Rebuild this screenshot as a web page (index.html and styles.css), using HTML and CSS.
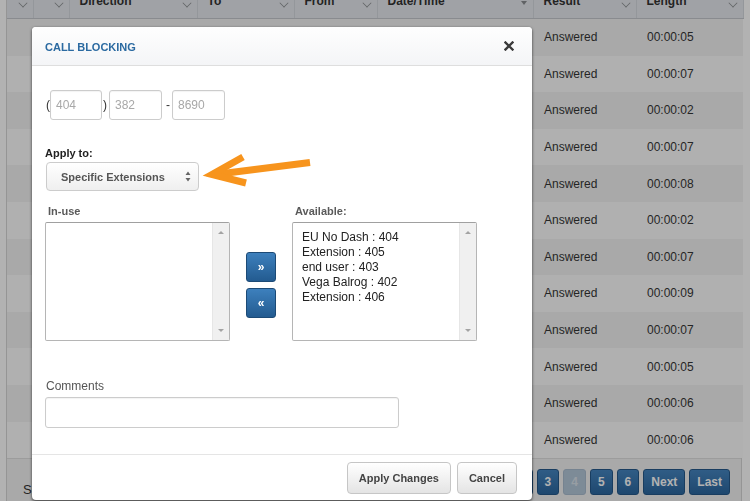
FILE: index.html
```html
<!DOCTYPE html>
<html lang="en">
<head>
<meta charset="utf-8"/>
<title>Call Log - Call Blocking</title>
<link rel="stylesheet" href="styles.css">
</head>
<body>
<div class="page">
  <table class="grid">
    <colgroup>
      <col style="width:26px"><col style="width:36px"><col style="width:128px"><col style="width:97px">
      <col style="width:83px"><col style="width:156px"><col style="width:103px"><col style="width:107px">
    </colgroup>
    <thead>
      <tr>
        <th><div class="th-in"><span></span><i class="chev"></i></div></th>
        <th><div class="th-in"><span></span><i class="chev"></i></div></th>
        <th><div class="th-in"><span>Direction</span><i class="chev"></i></div></th>
        <th><div class="th-in"><span>To</span><i class="chev"></i></div></th>
        <th><div class="th-in"><span>From</span><i class="chev"></i></div></th>
        <th><div class="th-in"><span>Date/Time</span><i class="caret"></i></div></th>
        <th><div class="th-in"><span>Result</span><i class="chev"></i></div></th>
        <th><div class="th-in"><span>Length</span><i class="chev"></i></div></th>
      </tr>
    </thead>
    <tbody id="rows"></tbody>
  </table>
  <div class="grid-foot">
    <span class="showing">Showing 31 to 40 of 64 entries</span>
    <div class="pager">
      <a class="pg">1</a>
      <a class="pg">2</a>
      <a class="pg">3</a>
      <a class="pg disabled">4</a>
      <a class="pg">5</a>
      <a class="pg">6</a>
      <a class="pg">Next</a>
      <a class="pg">Last</a>
    </div>
  </div>
</div>

<div class="backdrop"></div>

<div class="modal">
  <div class="modal-head">
    <span class="modal-title">CALL BLOCKING</span>
    <svg class="close" width="10" height="10" viewBox="0 0 10 10"><path d="M1.5 1.5 L8.5 8.5 M8.5 1.5 L1.5 8.5" stroke="#3a3a3a" stroke-width="2.4" stroke-linecap="square"/></svg>
  </div>
  <div class="modal-body">
    <div class="phone">
      <span class="paren-l">(</span>
      <input class="txt w52" placeholder="404">
      <span class="paren-r">)</span>
      <input class="txt w53" placeholder="382">
      <span class="dash">-</span>
      <input class="txt w53" placeholder="8690">
    </div>

    <div class="lbl-strong">Apply to:</div>
    <div class="select">
      <span>Specific Extensions</span>
      <svg width="6" height="11" viewBox="0 0 6 11"><path d="M3 0.5 L5.5 4 L0.5 4 Z M3 10.5 L5.5 7 L0.5 7 Z" fill="#666"/></svg>
    </div>

    <div class="pick">
      <div class="lbl-soft">In-use</div>
      <div></div>
      <div class="lbl-soft">Available:</div>

      <div class="listbox">
        <div class="items"></div>
        <div class="sbar"><i class="up"></i><i class="down"></i></div>
      </div>
      <div class="movers">
        <button class="btn-blue">&raquo;</button>
        <button class="btn-blue">&laquo;</button>
      </div>
      <div class="listbox">
        <div class="items">
          <div>EU No Dash : 404</div>
          <div>Extension : 405</div>
          <div>end user : 403</div>
          <div>Vega Balrog : 402</div>
          <div>Extension : 406</div>
        </div>
        <div class="sbar"><i class="up"></i><i class="down"></i></div>
      </div>
    </div>

    <div class="lbl-plain">Comments</div>
    <input class="txt comments">
  </div>
  <div class="modal-foot">
    <button class="btn">Apply Changes</button>
    <button class="btn">Cancel</button>
  </div>
</div>

<svg class="callout" width="120" height="45" viewBox="0 0 120 45">
  <g stroke="#f7941d" stroke-width="7" fill="none">
    <path d="M15 29.5 L110 17.5"/>
    <path d="M43 12 L12 29.5 L46 38"/>
  </g>
</svg>

<script>
var lengths = ["00:00:05","00:00:07","00:00:02","00:00:07","00:00:08","00:00:02","00:00:07","00:00:09","00:00:07","00:00:05","00:00:06","00:00:06"];
var html = "";
lengths.forEach(function (len) {
  html += "<tr><td></td><td></td><td></td><td></td><td></td><td></td><td>Answered</td><td>" + len + "</td></tr>";
});
document.getElementById("rows").innerHTML = html;
</script>
</body>
</html>
```

FILE: styles.css
```css
body {
  margin: 0;
  background: #fff;
  font-family: "Liberation Sans", Arial, sans-serif;
  font-size: 12px;
  color: #333;
  overflow: hidden;
}
.page {
  margin: -19px 8px 0 6px;
  border-left: 1px solid #d6d6d6;
  border-right: 1px solid #d6d6d6;
  background: #f3f3f3;
  height: 540px;
}
.grid {
  width: 735px;
  table-layout: fixed;
  border-collapse: collapse;
}
.grid th {
  height: 37px;
  padding: 0;
  background: #e6e9ee;
  border-right: 1px solid #d4d8de;
  border-bottom: 1px solid #c4c8cd;
  text-align: left;
  font-weight: bold;
}
.th-in {
  display: flex;
  justify-content: space-between;
  align-items: center;
  padding: 2px 6px 0 10px;
}
.chev {
  width: 7px;
  height: 7px;
  border-right: 1px solid #8a8d91;
  border-bottom: 1px solid #8a8d91;
  transform: rotate(45deg) scale(0.8, 0.8);
  margin-top: 4px;
}
.caret {
  width: 0;
  height: 0;
  border-left: 3px solid transparent;
  border-right: 3px solid transparent;
  border-top: 4px solid #8a8d91;
  margin-top: 4px;
}
.grid td {
  height: 36.6px;
  padding: 0 0 0 11px;
  color: #363636;
}
.grid tbody tr:nth-child(odd) td { background: #f3f3f3; }
.grid tbody tr:nth-child(even) td { background: #fdfdfd; }

.grid-foot {
  display: flex;
  justify-content: space-between;
  border-top: 1px solid #e0e0e0;
  padding: 10px 11px 0 16px;
}
.showing {
  padding-top: 13px;
  font-size: 13px;
}
.pager {
  display: flex;
  gap: 4px;
}
.pg {
  height: 26px;
  line-height: 24px;
  padding: 0 7px;
  border-radius: 3px;
  background: linear-gradient(#4585c0, #2c679f);
  border: 1px solid #24588a;
  box-sizing: border-box;
  color: #fff;
  font-weight: bold;
  text-align: center;
}
.pg.disabled {
  background: #b4c7d9;
  border-color: #a9bccf;
  color: #d9e2ea;
}

.backdrop {
  position: fixed;
  inset: 0;
  background: rgba(0, 0, 0, 0.3);
}

.modal {
  position: absolute;
  left: 32px;
  top: 27px;
  width: 500px;
  background: #fff;
  border-radius: 4px;
  box-shadow: 0 1px 3px rgba(0, 0, 0, 0.7);
}
.modal-head {
  height: 38px;
  display: flex;
  align-items: center;
  justify-content: space-between;
  padding: 0 18px 0 13px;
  background: linear-gradient(#fefefe, #f4f5f7);
  border-bottom: 1px solid #dedede;
  border-radius: 4px 4px 0 0;
}
.modal-title {
  font-size: 11px;
  font-weight: bold;
  color: #2b6aa1;
  margin-top: 1px;
}
.modal-body {
  padding: 24px 13px 26px 13px;
}
.phone {
  display: flex;
  align-items: center;
  height: 30px;
}
.paren-l { margin-left: 1px; }
.paren-r { margin: 0 2px 0 1px; }
.dash { margin: 0 2px 0 4px; }
.txt {
  box-sizing: border-box;
  height: 30px;
  border: 1px solid #ccc;
  border-radius: 3px;
  padding: 0 0 0 5px;
  font-family: inherit;
  font-size: 12px;
  color: #555;
  box-shadow: inset 0 1px 1px rgba(0, 0, 0, 0.05);
  outline: none;
}
.txt::placeholder { color: #a8a8a8; }
.w52 { width: 52px; }
.w53 { width: 53px; }

.lbl-strong {
  margin: 26px 0 2px;
  font-size: 11px;
  line-height: 14px;
  font-weight: bold;
  color: #222;
}
.select {
  box-sizing: border-box;
  width: 153px;
  height: 29px;
  margin-left: 1px;
  display: flex;
  align-items: center;
  justify-content: space-between;
  padding: 0 7px 0 14px;
  border: 1px solid #ccc;
  border-radius: 4px;
  background: linear-gradient(#fff, #efefef);
  font-size: 11px;
  font-weight: bold;
  color: #555;
}

.pick {
  display: grid;
  grid-template-columns: 185px 30px 185px;
  column-gap: 16px;
  margin-top: 13px;
}
.lbl-soft {
  padding-left: 3px;
  margin-bottom: 4px;
  font-size: 11px;
  line-height: 14px;
  font-weight: bold;
  color: #5a5a5a;
}
.listbox {
  box-sizing: border-box;
  height: 119px;
  display: flex;
  border: 1px solid #b5b5b5;
  border-top-color: #a0a0a0;
  border-radius: 2px;
  background: #fff;
}
.items {
  flex: 1;
  padding: 7px 0 0 9px;
  font-size: 12px;
  line-height: 15px;
  color: #222;
}
.sbar {
  width: 16px;
  position: relative;
  background: #f0f0f0;
  border-left: 1px solid #e6e6e6;
}
.sbar i {
  position: absolute;
  left: 5px;
  width: 0;
  height: 0;
  border-left: 3px solid transparent;
  border-right: 3px solid transparent;
}
.sbar .up { top: 8px; border-bottom: 3px solid #a3a3a3; }
.sbar .down { bottom: 8px; border-top: 3px solid #a3a3a3; }

.movers {
  display: flex;
  flex-direction: column;
  gap: 6px;
  padding-top: 30px;
}
.btn-blue {
  width: 30px;
  height: 30px;
  padding: 0;
  border: 1px solid #1c4a76;
  border-radius: 3px;
  background: linear-gradient(#3d80bd, #235b90);
  color: #fff;
  font-family: inherit;
  font-size: 12px;
  font-weight: bold;
}

.lbl-plain {
  margin: 38px 0 3px 1px;
  font-size: 12px;
  line-height: 15px;
  color: #555;
}
.comments {
  width: 354px;
  height: 31px;
  display: block;
}

.modal-foot {
  display: flex;
  justify-content: flex-end;
  gap: 6px;
  padding: 7px 15px 6px;
  border-top: 1px solid #e5e5e5;
}
.btn {
  height: 32px;
  padding: 0 11px;
  border: 1px solid #c6c6c6;
  border-radius: 4px;
  background: linear-gradient(#fff, #e4e4e4);
  font-family: inherit;
  font-size: 11px;
  font-weight: bold;
  color: #444;
}

.callout {
  position: absolute;
  left: 200px;
  top: 145px;
}
```
